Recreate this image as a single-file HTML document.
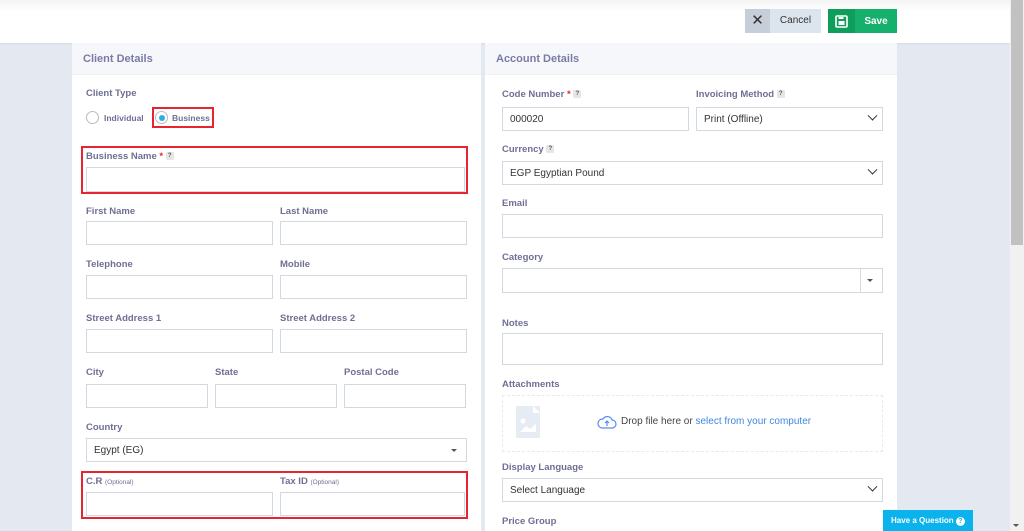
<!DOCTYPE html>
<html><head><meta charset="utf-8"><style>
*{box-sizing:border-box;margin:0;padding:0}
body{width:1024px;height:531px;overflow:hidden;background:#e4e9f1;font-family:"Liberation Sans",sans-serif;position:relative}
.a{position:absolute}
.hdr{left:0;top:0;width:1010px;height:43px;background:linear-gradient(#f3f3f3,#fff 12px);box-shadow:0 1px 2px rgba(0,0,0,.06)}
.panel{background:#fff;top:43px;height:488px}
.ph{background:#f5f7fa;height:32px;font-size:11px;font-weight:bold;color:#7b7ba6;padding:10px 11px;border-bottom:1px solid #eef1f5}
.l{font-size:9.5px;font-weight:bold;color:#6f6f94}
.l small{font-size:6.5px;font-weight:normal}
.in{border:1px solid #d3d8e0;background:#fff;height:24px;font-size:10px;color:#333;padding:6px 7px}
.red{border:2px solid #e52630}
.q{display:inline-block;width:8px;height:8px;background:#e6e6e6;font-size:6px;color:#555;text-align:center;line-height:8px;border-radius:1px;vertical-align:middle}
.st{color:#e52630}
.chev{position:absolute;right:6px;top:7px;width:7px;height:7px;border-right:1.8px solid #333;border-bottom:1.8px solid #333;transform:rotate(45deg) translate(-2px,-2px)}
.tri{position:absolute;right:9px;top:10px;border-left:3px solid transparent;border-right:3px solid transparent;border-top:3px solid #555}
</style></head><body>
<div class="a hdr"></div>
<div class="a" style="left:745px;top:9px;width:25px;height:24px;background:#c6ced9;font-size:15px;color:#333;text-align:center;line-height:23px">✕</div>
<div class="a" style="left:770px;top:9px;width:51px;height:24px;background:#dce4ee;font-size:10px;color:#333;text-align:center;line-height:24px">Cancel</div>
<div class="a" style="left:828px;top:9px;width:27px;height:24px;background:#0f9d5c"><svg width="27" height="24"><rect x="8" y="7" width="11" height="11" rx="1" fill="none" stroke="#fff" stroke-width="1.6"/><rect x="10.5" y="12" width="6" height="4" fill="#fff"/><rect x="10.5" y="8" width="5" height="2" fill="#fff"/></svg></div>
<div class="a" style="left:855px;top:9px;width:42px;height:24px;background:#14b06c;font-size:10px;font-weight:bold;color:#fff;text-align:center;line-height:25px">Save</div>
<div class="a" style="left:1010px;top:0;width:14px;height:531px;background:#f1f1f1"></div>
<div class="a" style="left:1011px;top:0;width:12px;height:245px;background:#c1c1c1"></div>

<div class="a panel" style="left:72px;width:409px"><div class="ph">Client Details</div></div>
<div class="a panel" style="left:485px;width:412px"><div class="ph">Account Details</div></div>

<div class="a l" style="left:86px;top:88px">Client Type</div>
<div class="a" style="left:86px;top:111px;width:13px;height:13px;border:1px solid #bbb;border-radius:50%"></div>
<div class="a l" style="left:104px;top:113px;font-size:8.5px">Individual</div>
<div class="a" style="left:152px;top:107px;width:62px;height:21px;border:2px solid #e52630"></div>
<div class="a" style="left:155px;top:111px;width:13px;height:13px;border:1px solid #bbb;border-radius:50%"><div style="margin:2.5px;width:6px;height:6px;border-radius:50%;background:#2ab0e0"></div></div>
<div class="a l" style="left:172px;top:113px;font-size:8.5px">Business</div>

<div class="a red" style="left:81px;top:146px;width:387px;height:48px"></div>
<div class="a l" style="left:86px;top:151px">Business Name <span class="st">*</span> <span class="q">?</span></div>
<div class="a in" style="left:86px;top:167px;width:379px;height:25px"></div>

<div class="a l" style="left:86px;top:206px">First Name</div><div class="a l" style="left:280px;top:206px">Last Name</div>
<div class="a in" style="left:86px;top:221px;width:187px"></div><div class="a in" style="left:280px;top:221px;width:187px"></div>
<div class="a l" style="left:86px;top:259px">Telephone</div><div class="a l" style="left:280px;top:259px">Mobile</div>
<div class="a in" style="left:86px;top:275px;width:187px"></div><div class="a in" style="left:280px;top:275px;width:187px"></div>
<div class="a l" style="left:86px;top:313px">Street Address 1</div><div class="a l" style="left:280px;top:313px">Street Address 2</div>
<div class="a in" style="left:86px;top:329px;width:187px"></div><div class="a in" style="left:280px;top:329px;width:187px"></div>
<div class="a l" style="left:86px;top:367px">City</div><div class="a l" style="left:215px;top:367px">State</div><div class="a l" style="left:344px;top:367px">Postal Code</div>
<div class="a in" style="left:86px;top:384px;width:122px"></div><div class="a in" style="left:215px;top:384px;width:122px"></div><div class="a in" style="left:344px;top:384px;width:122px"></div>
<div class="a l" style="left:86px;top:422px">Country</div>
<div class="a in" style="left:86px;top:438px;width:381px">Egypt (EG)<div class="tri"></div></div>
<div class="a red" style="left:81px;top:471px;width:387px;height:48px"></div>
<div class="a l" style="left:86px;top:476px">C.R <small>(Optional)</small></div><div class="a l" style="left:280px;top:476px">Tax ID <small>(Optional)</small></div>
<div class="a in" style="left:86px;top:492px;width:187px"></div><div class="a in" style="left:280px;top:492px;width:185px"></div>

<div class="a l" style="left:502px;top:89px">Code Number <span class="st">*</span> <span class="q">?</span></div>
<div class="a l" style="left:696px;top:89px">Invoicing Method <span class="q">?</span></div>
<div class="a in" style="left:502px;top:107px;width:187px">000020</div>
<div class="a in" style="left:696px;top:107px;width:187px">Print (Offline)<div class="chev"></div></div>
<div class="a l" style="left:502px;top:144px">Currency <span class="q">?</span></div>
<div class="a in" style="left:502px;top:161px;width:381px">EGP Egyptian Pound<div class="chev"></div></div>
<div class="a l" style="left:502px;top:198px">Email</div>
<div class="a in" style="left:502px;top:214px;width:381px"></div>
<div class="a l" style="left:502px;top:252px">Category</div>
<div class="a in" style="left:502px;top:268px;width:381px;height:25px"><div style="position:absolute;left:357px;top:0;width:1px;height:23px;background:#d3d8e0"></div><div class="tri"></div></div>
<div class="a l" style="left:502px;top:318px">Notes</div>
<div class="a in" style="left:502px;top:333px;width:381px;height:32px"></div>
<div class="a l" style="left:502px;top:379px">Attachments</div>
<div class="a" style="left:502px;top:395px;width:381px;height:57px;border:1px dashed #e6e9ef"></div>
<div class="a" style="left:516px;top:406px;width:24px;height:32px;background:#e6ecf3"><svg width="24" height="32"><circle cx="7" cy="15" r="2.5" fill="#fff"/><path d="M4 26 L10 20 L14 23 L20 18 L20 26 Z" fill="#fff"/><path d="M17 0 L24 7 L17 7 Z" fill="#fff"/></svg></div>
<svg class="a" style="left:597px;top:415px" width="20" height="14"><path d="M5 13 H15 A4 4 0 0 0 15 5 A5 5 0 0 0 6 4 A4.5 4.5 0 0 0 5 13 Z" fill="none" stroke="#5b8def" stroke-width="1.2"/><path d="M10 11 V6 M8 8 L10 6 L12 8" fill="none" stroke="#5b8def" stroke-width="1.2"/></svg>
<div class="a" style="left:621px;top:416px;font-size:10px;color:#444">Drop file here or <span style="color:#3f88e0">select from your computer</span></div>
<div class="a l" style="left:502px;top:462px">Display Language</div>
<div class="a in" style="left:502px;top:478px;width:381px">Select Language<div class="chev"></div></div>
<div class="a l" style="left:502px;top:516px">Price Group</div>
<div class="a" style="left:883px;top:510px;width:90px;height:21px;background:#0ab3ec;color:#fff;font-size:8px;font-weight:bold;padding:6px 0 0 8px">Have a Question <span style="display:inline-block;width:9px;height:9px;border-radius:50%;background:#fff;color:#0ab3ec;font-size:7px;text-align:center;line-height:9px">?</span></div>
<div class="a" style="left:1013px;top:524px;border-left:3px solid transparent;border-right:3px solid transparent;border-top:3px solid #555"></div>
</body></html>
